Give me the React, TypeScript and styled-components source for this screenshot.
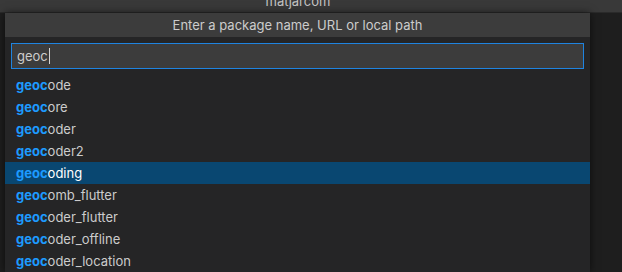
import React from 'react';
import styled, { createGlobalStyle } from 'styled-components';

const packages = [
  'geocode',
  'geocore',
  'geocoder',
  'geocoder2',
  'geocoding',
  'geocomb_flutter',
  'geocoder_flutter',
  'geocoder_offline',
  'geocoder_location',
];

const query = 'geoc';
const selectedIndex = 4;

const GlobalStyle = createGlobalStyle`
  html, body {
    margin: 0;
    padding: 0;
    background: #1e1e1e;
    overflow: hidden;
  }
  body {
    font-family: Inter, "Noto Sans", "Liberation Sans", sans-serif;
    -webkit-font-smoothing: antialiased;
  }
`;

const Window = styled.div`
  width: 622px;
  height: 272px;
  display: flex;
  flex-direction: column;
  background: #1e1e1e;
  overflow: hidden;
`;

const TitleBar = styled.div`
  height: 12px;
  flex-shrink: 0;
  display: flex;
  align-items: flex-end;
  justify-content: center;
  background: #393939;
  border-bottom: 1px solid #2a2a2a;
  overflow: hidden;
  padding-right: 26px;
`;

const Title = styled.span`
  font-size: 13px;
  line-height: 13px;
  color: #c4c4c4;
  margin-bottom: 4px;
`;

const Body = styled.div`
  flex: 1;
  display: flex;
  padding-left: 5px;
`;

const QuickPick = styled.div`
  width: 585px;
  display: flex;
  flex-direction: column;
  background: #252526;
  box-shadow: 0 0 8px rgba(0, 0, 0, 0.6);
`;

const Header = styled.div`
  height: 24px;
  display: flex;
  align-items: center;
  justify-content: center;
  background: #3c3c3c;
  color: #cccccc;
  font-size: 13px;
`;

const InputWrap = styled.div`
  padding: 6px 6px 5px;
`;

const InputBox = styled.div`
  height: 24px;
  display: flex;
  align-items: center;
  padding-left: 5px;
  background: #3c3c3c;
  border: 1px solid #1f84e0;
  color: #cccccc;
  font-size: 13px;
`;

const Caret = styled.span`
  display: inline-block;
  width: 1px;
  height: 16px;
  margin-left: 1px;
  background: #d4d4d4;
`;

const List = styled.ul`
  list-style: none;
  margin: 0;
  padding: 0;
`;

const Row = styled.li<{ $selected: boolean }>`
  height: 22px;
  display: flex;
  align-items: center;
  padding-left: 11px;
  font-size: 13px;
  color: ${({ $selected }) => ($selected ? '#ffffff' : '#cccccc')};
  background: ${({ $selected }) => ($selected ? '#094771' : 'transparent')};
`;

const Match = styled.span`
  color: #1d9bff;
  font-weight: 700;
`;

const App: React.FC = () => {
  return (
    <>
      <GlobalStyle />
      <Window>
        <TitleBar>
          <Title>matjarcom</Title>
        </TitleBar>
        <Body>
          <QuickPick>
            <Header>Enter a package name, URL or local path</Header>
            <InputWrap>
              <InputBox>
                {query}
                <Caret />
              </InputBox>
            </InputWrap>
            <List>
              {packages.map((name, i) => (
                <Row key={name} $selected={i === selectedIndex}>
                  <Match>{name.slice(0, query.length)}</Match>
                  {name.slice(query.length)}
                </Row>
              ))}
            </List>
          </QuickPick>
        </Body>
      </Window>
    </>
  );
};

export default App;
